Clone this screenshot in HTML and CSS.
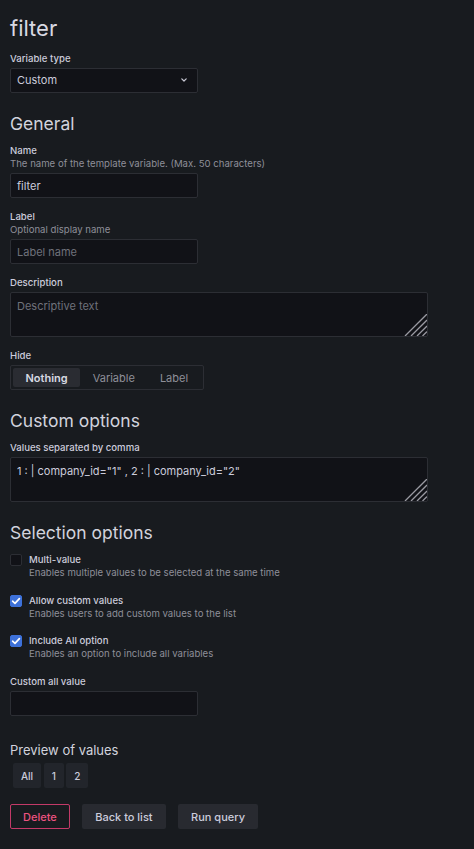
FILE: index.html
```html
<!DOCTYPE html>
<html lang="en">
<head>
<meta charset="utf-8">
<title>filter</title>
<link rel="stylesheet" href="styles.css">
</head>
<body>
<div class="page">
  <h1 class="title">filter</h1>

  <div class="field">
    <div class="field-head"><div class="label">Variable type</div></div>
    <div class="input select">
      <span>Custom</span>
      <svg class="chevron" width="6" height="4" viewBox="0 0 6 4"><path d="M0.8 0.8 L3 3 L5.2 0.8" fill="none" stroke="#c8c8d4" stroke-width="1.2" stroke-linecap="round" stroke-linejoin="round"/></svg>
    </div>
  </div>

  <h2 class="heading">General</h2>

  <div class="field">
    <div class="field-head">
      <div class="label">Name</div>
      <div class="desc">The name of the template variable. (Max. 50 characters)</div>
    </div>
    <div class="input">filter</div>
  </div>

  <div class="field">
    <div class="field-head">
      <div class="label">Label</div>
      <div class="desc">Optional display name</div>
    </div>
    <div class="input placeholder">Label name</div>
  </div>

  <div class="field">
    <div class="field-head"><div class="label">Description</div></div>
    <div class="textarea placeholder">
      Descriptive text
      <svg class="grip" width="24" height="22" viewBox="0 0 24 22"><g stroke="#9a9aa2" stroke-width="1.3"><line x1="2" y1="22" x2="24" y2="0"/><line x1="8" y1="22" x2="24" y2="6"/><line x1="14" y1="22" x2="24" y2="12"/><line x1="19.5" y1="22" x2="24" y2="17.5"/></g></svg>
    </div>
  </div>

  <div class="field">
    <div class="field-head"><div class="label">Hide</div></div>
    <div class="radio-group">
      <div class="radio active">Nothing</div>
      <div class="radio">Variable</div>
      <div class="radio">Label</div>
    </div>
  </div>

  <h2 class="heading heading-tight">Custom options</h2>

  <div class="field">
    <div class="field-head"><div class="label">Values separated by comma</div></div>
    <div class="textarea">
      1 : | company_id="1" , 2 : | company_id="2"
      <svg class="grip" width="24" height="22" viewBox="0 0 24 22"><g stroke="#9a9aa2" stroke-width="1.3"><line x1="2" y1="22" x2="24" y2="0"/><line x1="8" y1="22" x2="24" y2="6"/><line x1="14" y1="22" x2="24" y2="12"/><line x1="19.5" y1="22" x2="24" y2="17.5"/></g></svg>
    </div>
  </div>

  <h2 class="heading">Selection options</h2>

  <div class="check-row">
    <div class="checkbox"></div>
    <div>
      <div class="label">Multi-value</div>
      <div class="desc">Enables multiple values to be selected at the same time</div>
    </div>
  </div>
  <div class="check-row">
    <div class="checkbox checked"><svg width="12" height="12" viewBox="0 0 12 12"><path d="M2.6 6.2 L5 8.4 L9.4 3.6" fill="none" stroke="#fff" stroke-width="1.7" stroke-linecap="round" stroke-linejoin="round"/></svg></div>
    <div>
      <div class="label">Allow custom values</div>
      <div class="desc">Enables users to add custom values to the list</div>
    </div>
  </div>
  <div class="check-row">
    <div class="checkbox checked"><svg width="12" height="12" viewBox="0 0 12 12"><path d="M2.6 6.2 L5 8.4 L9.4 3.6" fill="none" stroke="#fff" stroke-width="1.7" stroke-linecap="round" stroke-linejoin="round"/></svg></div>
    <div>
      <div class="label">Include All option</div>
      <div class="desc">Enables an option to include all variables</div>
    </div>
  </div>

  <div class="field">
    <div class="field-head"><div class="label">Custom all value</div></div>
    <div class="input"></div>
  </div>

  <h3 class="preview-title">Preview of values</h3>
  <div class="chips">
    <div class="chip">All</div>
    <div class="chip">1</div>
    <div class="chip">2</div>
  </div>

  <div class="actions">
    <button class="btn btn-danger">Delete</button>
    <button class="btn">Back to list</button>
    <button class="btn">Run query</button>
  </div>
</div>
</body>
</html>
```
FILE: styles.css
```css
* { box-sizing: border-box; }

body {
  margin: 0;
  background: #181b1f;
  color: #ccccdc;
  font-family: Inter, "Noto Sans", sans-serif;
}

.page {
  display: flex;
  flex-direction: column;
  align-items: flex-start;
  padding: 15px 10px 20px;
}

.title {
  font-size: 22px;
  line-height: 26px;
  font-weight: 400;
  margin: 0 0 10.5px;
  color: #d8d9e2;
}

.heading {
  font-size: 17.5px;
  line-height: 22px;
  font-weight: 400;
  margin: 8px 0 9.5px;
  color: #d2d3dd;
}

.heading-tight {
  margin: 7.5px 0 9px;
}

.field {
  margin-bottom: 12px;
}

.field-head {
  margin-bottom: 3px;
}

.label {
  font-size: 9.6px;
  line-height: 13px;
  font-weight: 500;
  color: #ccccdc;
}

.desc {
  font-size: 9.6px;
  line-height: 13px;
  color: #8e8f99;
}

.input {
  width: 188px;
  height: 25px;
  background: #111217;
  border: 1px solid #2c2e34;
  border-radius: 2px;
  padding: 0 6px;
  font-size: 11px;
  display: flex;
  align-items: center;
  color: #ccccdc;
}

.select {
  justify-content: space-between;
  padding-right: 10px;
}

.placeholder {
  color: #6f717b;
}

.textarea {
  position: relative;
  width: 418px;
  height: 45px;
  background: #111217;
  border: 1px solid #2c2e34;
  border-radius: 2px;
  padding: 5px 6px;
  font-size: 11px;
  line-height: 16px;
}

.grip {
  position: absolute;
  right: 0;
  bottom: 0;
}

.radio-group {
  display: inline-flex;
  border: 1px solid #2c2e34;
  border-radius: 2px;
  padding: 2px;
  height: 25px;
}

.radio {
  height: 19px;
  padding: 0 12.5px;
  display: flex;
  align-items: center;
  font-size: 11px;
  color: #8e8f99;
  border-radius: 2px;
}

.radio.active {
  background: #2a2c32;
  color: #d8d9e2;
  font-weight: 600;
}

.check-row {
  display: flex;
  gap: 7px;
  margin-bottom: 14.5px;
}

.checkbox {
  width: 12px;
  height: 12px;
  margin-top: 1px;
  flex: none;
  border-radius: 2px;
  background: #111217;
  border: 1px solid #2c2e34;
}

.checkbox.checked {
  background: #3d71d9;
  border-color: #3d71d9;
  display: flex;
  align-items: center;
  justify-content: center;
}

.checkbox svg {
  display: block;
  flex: none;
}

.preview-title {
  font-size: 13px;
  line-height: 16px;
  font-weight: 400;
  margin: 14.7px 0 5.3px;
  color: #d2d3dd;
}

.chips {
  display: flex;
  gap: 2.5px;
  margin-left: 3px;
}

.chip {
  height: 25px;
  padding: 0 8px;
  display: flex;
  align-items: center;
  background: #22252b;
  font-size: 10px;
  font-weight: 500;
  color: #ccccdc;
  border-radius: 2px;
}

.actions {
  display: flex;
  gap: 12.5px;
  margin-top: 16px;
}

.btn {
  height: 25px;
  padding: 0 12px;
  font-family: inherit;
  font-size: 11px;
  font-weight: 500;
  color: #ccccdc;
  background: #282a30;
  border: 1px solid transparent;
  border-radius: 2px;
}

.btn-danger {
  background: transparent;
  border-color: #c33a68;
  color: #ec527f;
}
```
